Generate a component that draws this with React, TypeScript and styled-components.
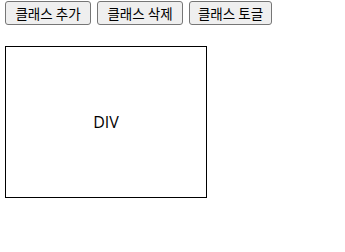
import React, { useState } from 'react'
import styled, { createGlobalStyle } from 'styled-components'

const GlobalStyle = createGlobalStyle`
	body {
		margin: 0;
		padding: 1px 5px;
		background: #fff;
		font-family: 'Noto Sans', 'Noto Sans CJK KR', sans-serif;
	}
`

const Toolbar = styled.div`
	display: flex;
	gap: 6px;
`

const Button = styled.button<{ $width: number }>`
	width: ${(p) => p.$width}px;
	height: 24px;
	padding: 0;
	background: #efefef;
	border: 1px solid #767676;
	border-radius: 3px;
	color: #000;
	font-family: 'Noto Sans CJK KR', sans-serif;
	font-size: 13.5px;
	line-height: 22px;
	text-align: center;
	cursor: pointer;
`

const Box = styled.div<{ $active: boolean }>`
	width: 200px;
	height: 150px;
	margin-top: 21px;
	border: 1px solid #000;
	display: flex;
	align-items: center;
	justify-content: center;
	font-family: 'Open Sans', sans-serif;
	font-size: 16px;
	color: #000;
	background: ${(p) => (p.$active ? '#ffe' : '#fff')};
`

const App = () => {
	const [active, setActive] = useState(false)

	return (
		<>
			<GlobalStyle />
			<Toolbar>
				<Button $width={86} onClick={() => setActive(true)}>클래스 추가</Button>
				<Button $width={86} onClick={() => setActive(false)}>클래스 삭제</Button>
				<Button $width={83} onClick={() => setActive(!active)}>클래스 토글</Button>
			</Toolbar>
			<Box $active={active}>DIV</Box>
		</>
	)
}

export default App
